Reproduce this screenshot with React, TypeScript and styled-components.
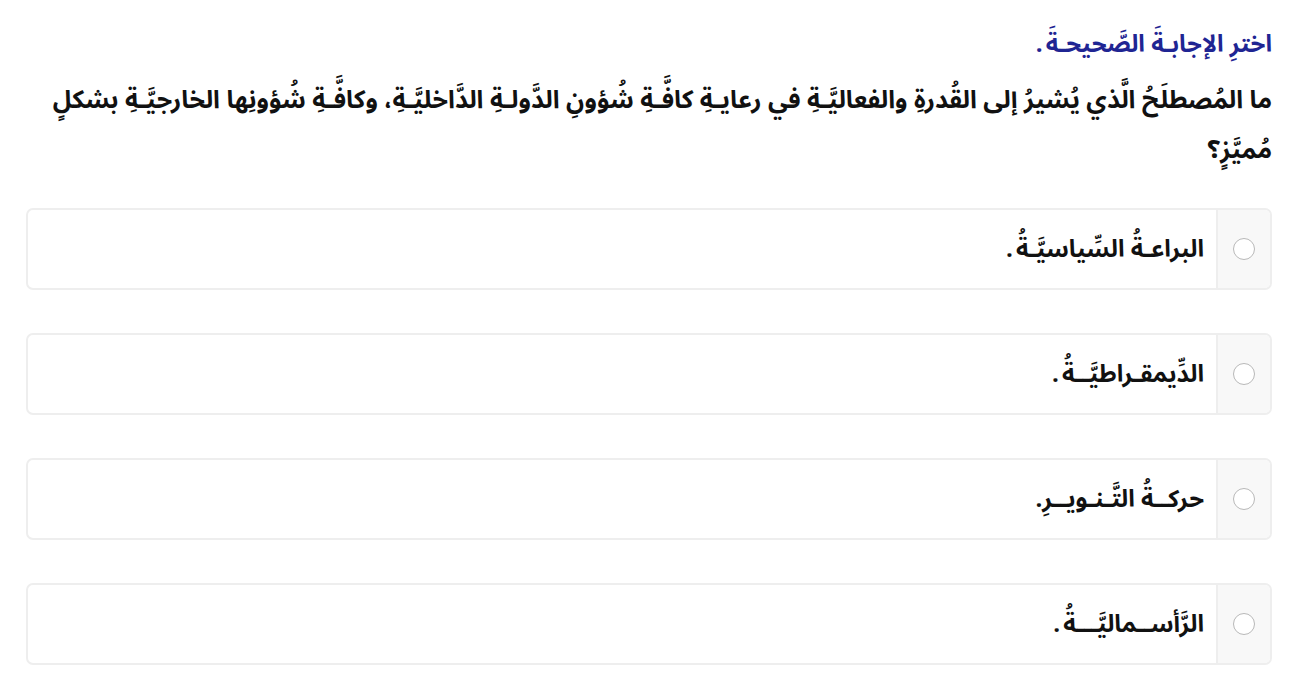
import React from "react";
import styled, { createGlobalStyle } from "styled-components";

const Global = createGlobalStyle`
  html, body { margin: 0; padding: 0; background: #fff; }
  body { font-family: "Noto Sans Arabic", "DejaVu Sans", sans-serif; }
`;

const Page = styled.div`
  direction: rtl;
  padding: 26px 21px 20px 26px;
  display: flex;
  flex-direction: column;
`;

const Title = styled.div`
  color: #1f2593;
  font-weight: 700;
  font-size: 24px;
  line-height: 38px;
`;

const Question = styled.div`
  color: #111;
  font-weight: 700;
  font-size: 25px;
  line-height: 50px;
  margin-top: 11px;
`;

const Options = styled.div`
  display: flex;
  flex-direction: column;
  gap: 43px;
  margin-top: 33px;
`;

const Option = styled.label`
  display: flex;
  align-items: stretch;
  height: 82px;
  box-sizing: border-box;
  border: 2px solid #eeeeee;
  border-radius: 7px;
  overflow: hidden;
  cursor: pointer;
`;

const RadioCell = styled.div`
  width: 52px;
  flex: none;
  background: #f8f8f8;
  border-left: 2px solid #eeeeee;
  display: flex;
  align-items: center;
  justify-content: center;
`;

const Circle = styled.span`
  width: 22px;
  height: 22px;
  border-radius: 50%;
  border: 1.2px solid #b8b8b8;
  background: #fff;
  box-sizing: border-box;
`;

const OptionText = styled.div`
  display: flex;
  align-items: center;
  padding-right: 12px;
  font-size: 24px;
  font-weight: 700;
  color: #111;
`;

const options = [
  "البراعـةُ السِّياسيَّـةُ\u2009.",
  "الدِّيمقـراطيَّــةُ\u2009.",
  "حركــةُ التَّـنـويــرِ.",
  "الرَّأســماليَّـــةُ\u2009.",
];

export default function App() {
  return (
    <>
      <Global />
      <Page>
        <Title>اخترِ الإجابـةَ الصَّحيحـةَ{"\u2009"}.</Title>
        <Question>
          ما المُصطلَحُ الَّذي يُشيرُ إلى القُدرةِ والفعاليَّـةِ في رعايـةِ كافَّـةِ شُؤونِ الدَّولـةِ الدَّاخليَّـةِ، وكافَّـةِ شُؤونِها الخارجيَّـةِ بشكلٍ مُميَّزٍ؟
        </Question>
        <Options>
          {options.map((o, i) => (
            <Option key={i}>
              <RadioCell>
                <Circle />
              </RadioCell>
              <OptionText>{o}</OptionText>
            </Option>
          ))}
        </Options>
      </Page>
    </>
  );
}
